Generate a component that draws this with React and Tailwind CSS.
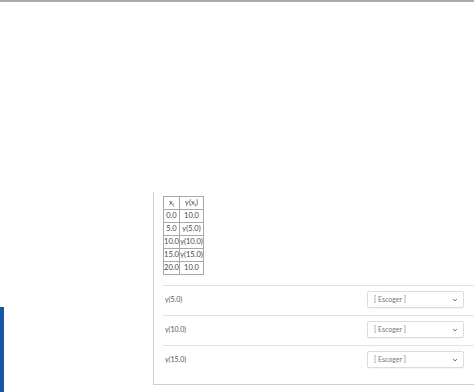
import React from "react";

const rows = [
  ["0.0", "10.0"],
  ["5.0", "y(5.0)"],
  ["10.0", "y(10.0)"],
  ["15.0", "y(15.0)"],
  ["20.0", "10.0"],
];

function Chevron() {
  return (
    <svg viewBox="0 0 10 10" className="w-[6px] h-[6px]" aria-hidden="true">
      <path d="M2 3.5 L5 6.5 L8 3.5" fill="none" stroke="#555" strokeWidth="1.6" />
    </svg>
  );
}

function Question({ label }) {
  return (
    <div className="flex items-start justify-between border-t border-[#e2e2e2] h-[30px] pt-[5px] pr-[19px]">
      <span className="pl-[2px] pt-[3px] text-[7px] text-[#555]">{label}</span>
      <div className="flex items-center justify-between w-[97px] h-[17px] border border-[#dcdcdc] rounded-[2px] bg-white pl-[6px] pr-[5px] shadow-[0_1px_1px_rgba(0,0,0,0.04)]">
        <span className="text-[7px] text-[#777]">[ Escoger ]</span>
        <Chevron />
      </div>
    </div>
  );
}

export default function App() {
  return (
    <div className="w-[474px] h-[392px] overflow-hidden bg-white flex flex-col" style={{ fontFamily: "Lato, 'Liberation Sans', sans-serif" }}>
      <div className="h-[2px] bg-[#ababab] shrink-0" />
      <div className="flex flex-1">
        {/* sidebar */}
        <div className="w-[153px] shrink-0 flex flex-col justify-end">
          <div className="w-[4px] h-[85px] bg-[#1a56a6]" />
        </div>

        {/* question card */}
        <div className="mt-[190px] w-[330px] shrink-0 h-[193px] border-l border-b border-[#cfcfcf] pl-[9px] pt-[4px]">
          <table className="border-collapse text-[7.5px] text-[#444] text-center leading-none">
            <thead>
              <tr>
                <th className="font-normal border border-[#a8a8a8] w-[16px] h-[13px]">
                  x<sub className="text-[5px]">i</sub>
                </th>
                <th className="font-normal border border-[#a8a8a8] w-[24px] h-[13px]">
                  y(x<sub className="text-[5px]">i</sub>)
                </th>
              </tr>
            </thead>
            <tbody>
              {rows.map(([x, y]) => (
                <tr key={x}>
                  <td className="border border-[#a8a8a8] h-[13px] px-0">{x}</td>
                  <td className="border border-[#a8a8a8] h-[13px] px-0">{y}</td>
                </tr>
              ))}
            </tbody>
          </table>

          <div className="mt-[10px]">
            <Question label="y(5.0)" />
            <Question label="y(10.0)" />
            <Question label="y(15.0)" />
          </div>
        </div>
      </div>
    </div>
  );
}
